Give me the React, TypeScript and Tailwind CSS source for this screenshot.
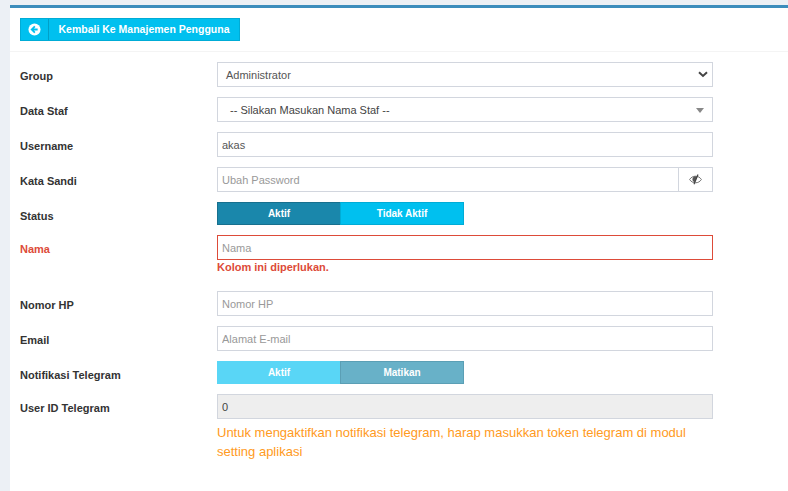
import React from "react";

const inputCls =
  "block h-[25px] w-full border border-[#d2d6de] bg-white px-[4px] text-[11px] text-[#555] placeholder:text-[#999] outline-none";

function Row({
  label,
  red,
  children,
  mb = "mb-[10px]",
}: {
  label: string;
  red?: boolean;
  children: React.ReactNode;
  mb?: string;
}) {
  return (
    <div className={`flex ${mb}`}>
      <label
        className={`w-[197px] shrink-0 pt-[7px] text-[11px] leading-[15px] font-bold ${
          red ? "text-[#dd4b39]" : "text-[#333]"
        }`}
      >
        {label}
      </label>
      <div className="w-[496px]">{children}</div>
    </div>
  );
}

function Toggle({
  a,
  b,
  aCls,
  bCls,
}: {
  a: string;
  b: string;
  aCls: string;
  bCls: string;
}) {
  return (
    <div className="flex h-[23px] w-[247px] text-[10px] font-bold text-white">
      <div className={`flex w-[124px] items-center justify-center border ${aCls}`}>{a}</div>
      <div className={`-ml-px flex w-[124px] items-center justify-center border ${bCls}`}>{b}</div>
    </div>
  );
}

export default function App() {
  return (
    <div
      className="h-[491px] w-[788px] overflow-hidden bg-[#ecf0f5] pt-[5px] pl-[10px]"
      style={{ fontFamily: '"Liberation Sans", Arial, sans-serif' }}
    >
      <div className="h-[486px] border-t-[3px] border-[#3c8dbc] bg-white">
        <div className="h-[44px] border-b border-[#f4f4f4] pt-[10px] pl-[10px]">
          <button className="flex h-[23px] w-[220px] items-center border border-[#00acd6] bg-[#00c0ef] text-[10.5px] font-bold text-white">
            <span className="flex h-full w-[28px] shrink-0 items-center justify-center border-r border-[#00a0c8]">
              <svg width="13" height="13" viewBox="0 0 14 14">
                <circle cx="7" cy="7" r="6.5" fill="#fff" />
                <path d="M7.4 3.6 4 7l3.4 3.4M4.4 7h6" fill="none" stroke="#00c0ef" strokeWidth="1.9" />
              </svg>
            </span>
            <span className="flex-1 whitespace-nowrap text-center">Kembali Ke Manajemen Pengguna</span>
          </button>
        </div>
        <form className="pt-[10px] pl-[10px]">
          <Row label="Group">
            <div className="relative">
              <div className="flex h-[25px] items-center border border-[#d2d6de] pt-px pl-[8px] text-[11px] text-[#555]">
                Administrator
              </div>
              <svg className="absolute top-[9px] right-[5px]" width="10" height="7" viewBox="0 0 10 7">
                <path d="M1 1.3 5 5l4-3.7" fill="none" stroke="#444" strokeWidth="2" />
              </svg>
            </div>
          </Row>
          <Row label="Data Staf">
            <div className="relative">
              <div className="flex h-[25px] items-center border border-[#d2d6de] pt-px pl-[12px] text-[11px] text-[#444]">
                -- Silakan Masukan Nama Staf --
              </div>
              <div className="absolute top-[11px] right-[9px] h-0 w-0 border-x-[4px] border-t-[5px] border-x-transparent border-t-[#888]" />
            </div>
          </Row>
          <Row label="Username">
            <input className={inputCls} defaultValue="akas" />
          </Row>
          <Row label="Kata Sandi">
            <div className="flex">
              <input className={inputCls} placeholder="Ubah Password" />
              <span className="-ml-px flex h-[25px] w-[35px] shrink-0 items-center justify-center border border-[#d2d6de]">
                <svg width="13" height="11" viewBox="0 0 13 11">
                  <path d="M.6 5.5C2 3.4 4 2.2 6.5 2.2s4.5 1.2 5.9 3.3C11 7.6 9 8.8 6.5 8.8S2 7.6.6 5.5z" fill="none" stroke="#666" strokeWidth="0.9" />
                  <path d="M3.4 5.4a3 3 0 0 1 5-2.4L5.6 8.2A3 3 0 0 1 3.4 5.4z" fill="#555" />
                  <path d="M9 .6 5 10.2" stroke="#444" strokeWidth="1.2" />
                </svg>
              </span>
            </div>
          </Row>
          <Row label="Status">
            <Toggle
              a="Aktif"
              b="Tidak Aktif"
              aCls="bg-[#1a87ab] border-[#17708e]"
              bCls="bg-[#00c0ef] border-[#00acd6]"
            />
          </Row>
          <Row label="Nama" red mb="mb-[16px]">
            <input className={`${inputCls} !border-[#dd4b39]`} placeholder="Nama" />
            <div className="h-[15px] text-[11px] leading-[15px] font-bold text-[#dd4b39]">
              Kolom ini diperlukan.
            </div>
          </Row>
          <Row label="Nomor HP">
            <input className={inputCls} placeholder="Nomor HP" />
          </Row>
          <Row label="Email">
            <input className={inputCls} placeholder="Alamat E-mail" />
          </Row>
          <Row label="Notifikasi Telegram">
            <Toggle
              a="Aktif"
              b="Matikan"
              aCls="bg-[#59d6f6] border-[#59d6f6]"
              bCls="bg-[#68b1c8] border-[#5b9fb5]"
            />
          </Row>
          <Row label="User ID Telegram">
            <input className={`${inputCls} !bg-[#eee] !text-[#444]`} defaultValue="0" disabled />
            <div className="mt-[5px] text-[13px] leading-[18.57px] text-[#ff9a22]">
              Untuk mengaktifkan notifikasi telegram, harap masukkan token telegram di modul setting aplikasi
            </div>
          </Row>
        </form>
      </div>
    </div>
  );
}
